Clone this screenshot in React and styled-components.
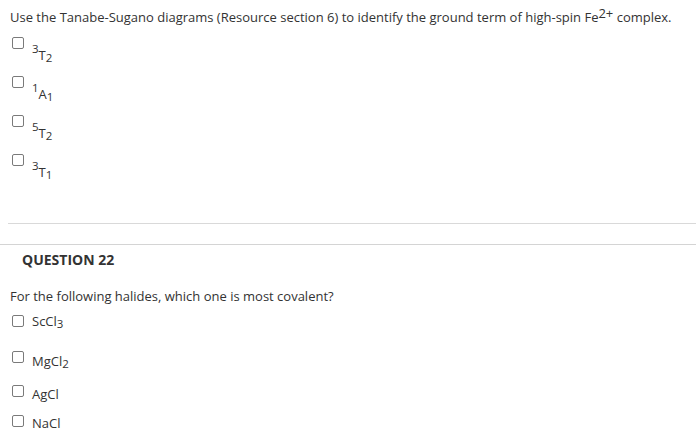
import React from "react";
import styled, { createGlobalStyle } from "styled-components";

const GlobalStyle = createGlobalStyle`
  body {
    margin: 0;
    background: #fff;
    font-family: "Open Sans", "Liberation Sans", sans-serif;
    font-size: 13px;
    color: #333;
  }
`;

const Page = styled.div`
  width: 696px;
  height: 432px;
  overflow: hidden;
`;

const QuestionBody = styled.div`
  padding: ${({ top }) => top}px 0 0 10px;
`;

const Prompt = styled.div`
  line-height: 18px;
  white-space: nowrap;
`;

const Charge = styled.span`
  position: relative;
  top: -4px;
  line-height: 0;
`;

const OptionList = styled.div`
  display: flex;
  flex-direction: column;
  padding-left: 2px;
  margin-top: ${({ gap }) => gap}px;
`;

const Option = styled.div`
  display: flex;
  align-items: flex-start;
  height: ${({ h }) => h}px;
`;

const Box = styled.span`
  flex: none;
  width: 10px;
  height: 10px;
  border: 1px solid #7a7a7a;
  border-radius: 2px;
  background: #fff;
`;

const Label = styled.span`
  margin-left: 8px;
  padding-top: ${({ drop }) => drop}px;
  line-height: 12px;
  white-space: nowrap;
`;

const Sup = styled.span`
  position: relative;
  top: -7px;
  font-size: 11.5px;
  line-height: 0;
`;

const Sub = styled.span`
  position: relative;
  top: 2px;
  font-size: 11.5px;
  line-height: 0;
`;

const Divider = styled.div`
  margin: ${({ top }) => top}px 0 0 8px;
  border-top: 1px solid #d9d9d9;
`;

const HeaderBar = styled.div`
  margin-top: 20px;
  border-top: 1px solid #d4d4d4;
  padding: 6px 0 18px 22px;
  font-size: 14px;
  font-weight: 700;
  color: #333;
  line-height: 18px;
`;

const firstOptions = [
  { sup: "3", main: "T", sub: "2" },
  { sup: "1", main: "A", sub: "1" },
  { sup: "5", main: "T", sub: "2" },
  { sup: "3", main: "T", sub: "1" },
];

const secondOptions = [
  { main: "ScCl", sub: "3", h: 36, drop: 0 },
  { main: "MgCl", sub: "2", h: 34, drop: 4 },
  { main: "AgCl", h: 30, drop: 3 },
  { main: "NaCl", h: 17, drop: 2 },
];

export default function App() {
  return (
    <Page>
      <GlobalStyle />
      <QuestionBody top={8}>
        <Prompt>
          Use the Tanabe-Sugano diagrams (Resource section 6) to identify the
          ground term of high-spin Fe<Charge>2+</Charge> complex.
        </Prompt>
        <OptionList gap={11}>
          {firstOptions.map((o, i) => (
            <Option key={i} h={39}>
              <Box />
              <Label drop={12}>
                <Sup>{o.sup}</Sup>
                {o.main}
                <Sub>{o.sub}</Sub>
              </Label>
            </Option>
          ))}
        </OptionList>
      </QuestionBody>
      <Divider top={30} />
      <HeaderBar>QUESTION 22</HeaderBar>
      <QuestionBody top={0}>
        <Prompt>For the following halides, which one is most covalent?</Prompt>
        <OptionList gap={10}>
          {secondOptions.map((o, i) => (
            <Option key={i} h={o.h}>
              <Box />
              <Label drop={o.drop}>
                {o.main}
                {o.sub && <Sub>{o.sub}</Sub>}
              </Label>
            </Option>
          ))}
        </OptionList>
      </QuestionBody>
    </Page>
  );
}
